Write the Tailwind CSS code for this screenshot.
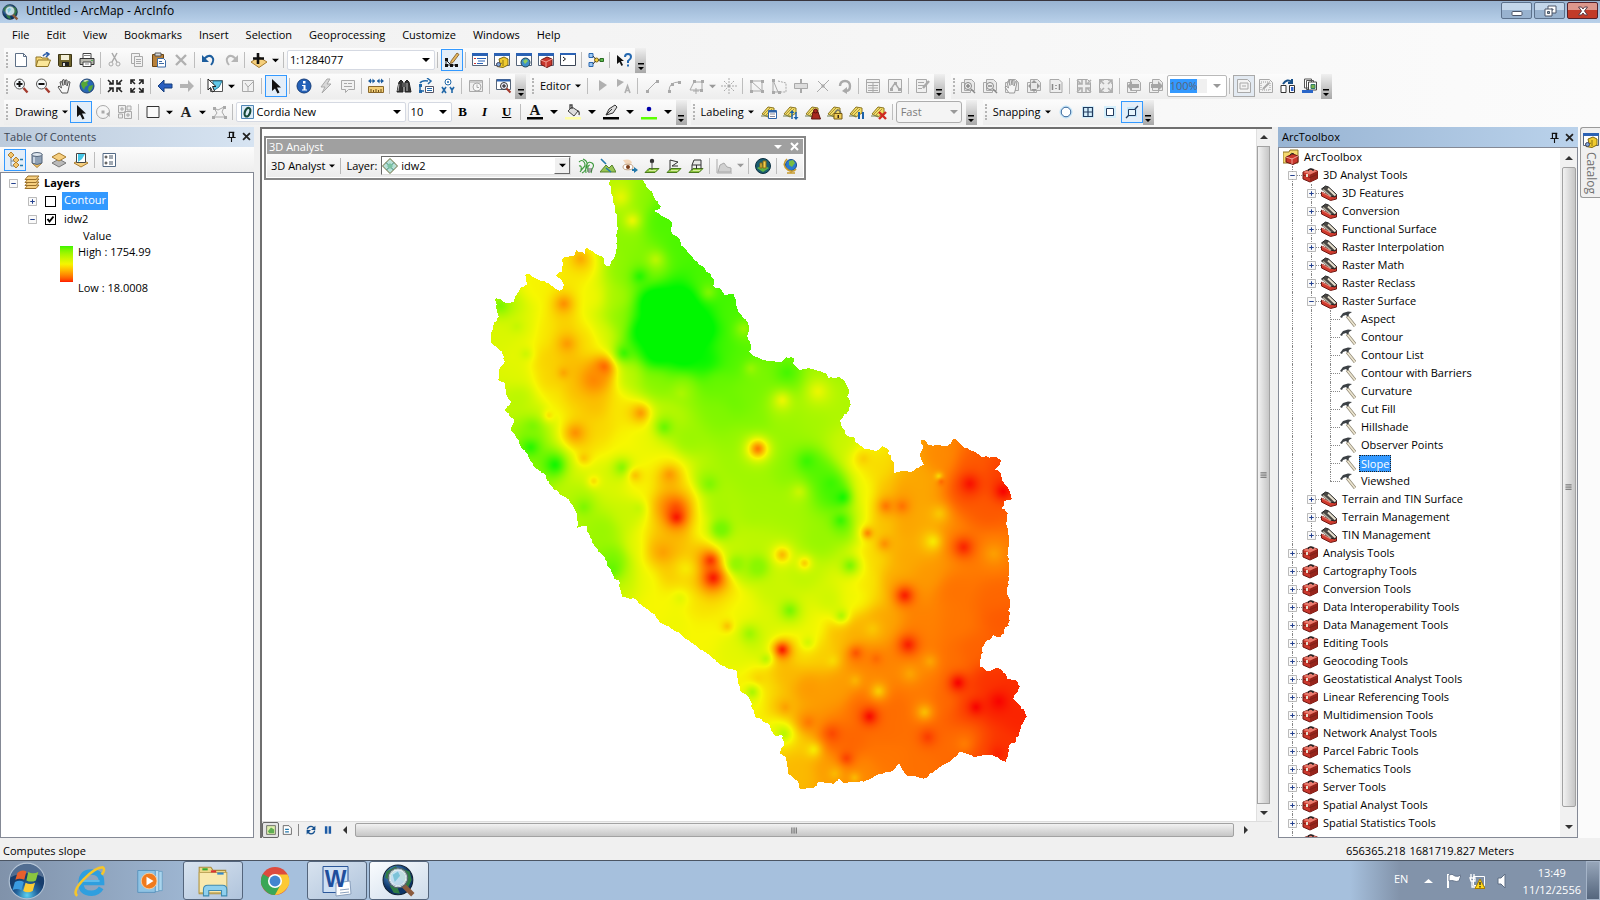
<!DOCTYPE html>
<html lang="en">
<head>
<meta charset="utf-8">
<title>Untitled - ArcMap - ArcInfo</title>
<script src="https://cdn.jsdelivr.net/npm/@tailwindcss/browser@4"></script>
</head>
<body class="flex h-screen flex-col overflow-hidden bg-[#f0f0f0] font-['Open_Sans','Noto_Sans',sans-serif] text-[11px] leading-4 text-black">

<!-- Title bar -->
<header class="flex h-[23px] shrink-0 items-center border-t border-[#38343c] bg-linear-to-b from-[#98b3d1] to-[#b9d1ea] pl-[2px]">
  <span data-icon="arcmap" class="size-[17px]"></span>
  <h1 class="ml-[7px] flex-1 pb-[2px] text-[12px]">Untitled - ArcMap - ArcInfo</h1>
  <div class="flex gap-[2px] self-start pt-px pr-[2px]">
    <button aria-label="Minimize" class="flex h-[17px] w-[31px] items-center justify-center rounded-[2px] border border-[#5c718c] bg-linear-to-b from-[#c3d6ea] from-50% to-[#98b2cf] to-50%"><svg class="h-3 w-4" viewBox="0 0 16 12"><rect x="3" y="6.500" width="10" height="4" rx="1" fill="#fff" stroke="#4b5468"/></svg></button>
    <button aria-label="Restore" class="flex h-[17px] w-[31px] items-center justify-center rounded-[2px] border border-[#5c718c] bg-linear-to-b from-[#c3d6ea] from-50% to-[#98b2cf] to-50%"><svg class="h-3 w-4" viewBox="0 0 16 12"><path d="M6 1h8v7h-8zM9 4h2v1h-2z" fill="#fff" stroke="#4b5468"/><path d="M3 4h7v7h-7z" fill="#fff" stroke="#4b5468"/><path d="M5.500 6.500h2v2h-2z" fill="#8aa" stroke="#4b5468"/></svg></button>
    <button aria-label="Close" class="flex h-[17px] w-[31px] items-center justify-center rounded-[2px] border border-[#54202a] bg-linear-to-b from-[#dd978c] from-50% to-[#c23b28] to-50%"><svg class="h-3 w-4" viewBox="0 0 16 12"><path d="M3.500 2h3l1.500 2 1.500-2h3l-3 4 3 4h-3l-1.500-2-1.500 2h-3l3-4z" fill="#fff" stroke="#5b3a44"/></svg></button>
  </div>
</header>

<!-- Menu and toolbars -->
<nav class="flex h-6 shrink-0 items-center gap-[17px] bg-linear-to-r from-[#f0f0f0] to-[#fbfbfb] pb-px pl-3">
  <button>File</button><button>Edit</button><button>View</button><button>Bookmarks</button><button>Insert</button><button>Selection</button><button>Geoprocessing</button><button>Customize</button><button>Windows</button><button>Help</button>
</nav>
<section class="flex h-20 shrink-0 flex-col bg-linear-to-r from-[#f0f0f0] to-[#fbfbfb]">
  <div class="flex h-[26px] items-center pl-1">
    <div class="flex h-[25px] items-center bg-linear-to-b from-[#fcfcfc] to-[#ededed]">
      <span data-grip></span>
      <div class="flex items-center" data-tools="new open save print | cut copy paste delete | undo redo | add ▾ |"></div>
      <span class="relative flex"><select aria-label="Map scale" class="h-5 w-[148px] appearance-none rounded-[2px] border border-[#d5d9e2] bg-white pl-[2px] leading-4"><option>1:1284077</option></select><span data-caret></span></span>
      <div class="flex items-center" data-tools="| *edittool | toc catalog search toolbox python | model | whats"></div>
      <span data-overflow></span>
    </div>
  </div>
  <div class="flex h-[26px] items-center pl-1">
    <div class="flex h-[25px] items-center bg-linear-to-b from-[#fcfcfc] to-[#ededed]">
      <span data-grip></span>
      <div class="flex items-center" data-tools="zoomin zoomout pan globe | fixin fixout | back forward | selectf ▾ clearsel | *pointer | info bolt popup | measure | find route xy | time | viewer"></div>
      <span data-overflow></span>
    </div>
    <div class="ml-1 flex h-[25px] items-center bg-linear-to-b from-[#fcfcfc] to-[#ededed]">
      <span data-grip></span>
      <button class="flex items-center gap-1 px-1">Editor<span data-tri></span></button>
      <div class="flex items-center" data-tools="| gpointer ganno | gline garc gpoly ▿ gpoint | greshape gcut gsplit gcross grotate | gtable gsketch | gcreate"></div>
      <span data-overflow></span>
    </div>
    <div class="ml-[6px] flex h-[25px] items-center bg-linear-to-b from-[#fcfcfc] to-[#ededed]">
      <span data-grip></span>
      <div class="flex items-center" data-tools="pzin pzout ppan pfull pone | pfixin pfixout | pback pfwd"></div>
      <span class="flex h-[22px] w-[60px] items-center rounded-[2px] border border-[#b9b9b9] bg-white px-[2px]"><input aria-label="Page zoom" value="100%" class="h-[14px] w-[27px] bg-[#3399ff] text-[#58667a]"><span class="h-[14px] w-[10px] bg-[#f0f0f0]"></span><svg class="ml-[6px] size-2" viewBox="0 0 8 8"><path d="M0 2h8l-4 4z" fill="#999"/></svg></span>
      <div class="flex items-center" data-tools="| #pdraft pfocus pages ddp"></div>
      <span data-overflow></span>
    </div>
  </div>
  <div class="flex h-[26px] items-center pl-1">
    <div class="flex h-[25px] items-center bg-linear-to-b from-[#fcfcfc] to-[#ededed]">
      <span data-grip></span>
      <button class="flex items-center gap-1 pr-[2px] pl-[5px]">Drawing<span data-tri></span></button>
      <div class="flex items-center" data-tools="*pointer grotsel gzoomsel | rect ▾ textA ▾ gedit |"></div>
      <span class="relative flex items-center"><span data-icon="opentype" class="absolute left-1 size-4"></span><select aria-label="Font" class="h-5 w-[170px] appearance-none rounded-[2px] border border-[#d5d9e2] bg-white pl-5 leading-4"><option>Cordia New</option></select><span data-caret></span></span>
      <span class="relative ml-[2px] flex"><select aria-label="Font size" class="h-5 w-[44px] appearance-none rounded-[2px] border border-[#d5d9e2] bg-white pl-[2px] leading-4"><option>10</option></select><span data-caret></span></span>
      <div class="flex items-center font-['Liberation_Serif',serif] text-[13px] font-bold">
        <button class="w-[22px]">B</button><button class="w-[22px] italic">I</button><button class="w-[22px] underline">U</button>
      </div>
      <div class="flex items-center" data-tools="| fontcol ▼ fillcol ▼ linecol ▼ markcol ▼"></div>
      <span data-overflow></span>
    </div>
    <div class="ml-1 flex h-[25px] items-center bg-linear-to-b from-[#fcfcfc] to-[#ededed]">
      <span data-grip></span>
      <button class="flex items-center gap-1 px-1">Labeling<span data-tri></span></button>
      <div class="flex items-center" data-tools="lmgr lprio lweight llock lpause lunpl |"></div>
      <span class="relative flex"><select aria-label="Label quality" class="h-[22px] w-[66px] appearance-none rounded-[3px] border border-[#adadad] bg-[#f4f4f4] pl-1 leading-4 text-[#7c7c7c]"><option>Fast</option></select><svg class="pointer-events-none absolute top-[7px] right-1 size-2" viewBox="0 0 8 8"><path d="M0 2h8l-4 4z" fill="#999"/></svg></span>
      <span data-overflow class="ml-1"></span>
    </div>
    <div class="ml-[6px] flex h-[25px] items-center bg-linear-to-b from-[#fcfcfc] to-[#ededed]">
      <span data-grip></span>
      <button class="flex items-center gap-1 px-1">Snapping<span data-tri></span></button>
      <div class="flex items-center" data-tools="snappt snapend snapvert *snapedge"></div>
      <span data-overflow></span>
    </div>
  </div>
</section>

<main class="flex min-h-0 flex-1">
  <!-- Table of contents -->
  <aside class="flex w-[254px] shrink-0 flex-col">
    <div class="flex h-5 shrink-0 items-center bg-linear-to-r from-[#bccbdc] to-[#d7e4f2] pr-[2px] pb-px pl-1 text-[#3c4654]">
      <h2 class="flex-1">Table Of Contents</h2>
      <button data-icon="pin" aria-label="Auto hide" class="mr-1 size-[11px]"></button><button data-icon="x" aria-label="Close" class="size-[11px]"></button>
    </div>
    <div class="flex h-[25px] shrink-0 items-center bg-linear-to-b from-[#fcfcfc] to-[#eee] pl-1" data-tools="*listdraw listsrc listvis listsel | options"></div>
    <div class="flex-1 border border-[#848995] bg-white pt-px pl-2">
      <div class="flex h-[18px] items-center"><button data-icon="minus" aria-label="Collapse Layers" class="size-[9px]"></button><span data-icon="layers" class="mr-1 ml-[6px] size-4"></span><b>Layers</b></div>
      <div class="flex h-[18px] items-center pl-[19px]"><button data-icon="plus" aria-label="Expand Contour" class="size-[9px]"></button><input id="c1" type="checkbox" class="ml-2 size-[11px] appearance-none border border-black bg-white"><label for="c1" class="ml-[6px] h-[18px] bg-[#3399ff] px-[2px] text-white">Contour</label></div>
      <div class="flex h-[18px] items-center pl-[19px]"><button data-icon="minus" aria-label="Collapse idw2" class="size-[9px]"></button><span class="relative ml-2 flex"><input id="c2" type="checkbox" checked class="size-[11px] appearance-none border border-black bg-white"><svg class="pointer-events-none absolute inset-0 size-[11px]" viewBox="0 0 11 11"><path d="M2.500 5l2 2.500 4-5" fill="none" stroke="#000" stroke-width="2"/></svg></span><label for="c2" class="ml-2">idw2</label></div>
      <p class="pl-[74px] leading-4">Value</p>
      <div class="flex pl-[51px]">
        <div class="mt-[2px] h-9 w-[13px] bg-linear-to-b from-[#35f500] via-[#f5f500] to-[#ff1000]"></div>
        <div class="ml-[5px] flex h-[52px] flex-col justify-between"><span>High : 1754.99</span><span>Low : 18.0008</span></div>
      </div>
    </div>
  </aside>

  <!-- Map view -->
  <section class="ml-[6px] flex min-w-0 flex-1 flex-col border-t-2 border-l-2 border-[#6f6f6f]">
    <div class="flex min-h-0 flex-1">
      <div class="relative min-w-0 flex-1 overflow-hidden bg-white">
        <canvas id="idw" width="570" height="630" role="img" aria-label="idw2 elevation raster" class="absolute top-[51px] left-[208px]"></canvas>
        <!-- Floating 3D Analyst toolbar -->
        <div class="absolute top-[7px] left-[2px] w-[542px] border-2 border-[#868686] bg-white p-px">
          <div class="flex h-[15px] items-center bg-[#a0a0a0] pr-1 pl-[2px] text-white"><span class="flex-1">3D Analyst</span><svg class="mr-2 size-2" viewBox="0 0 8 8"><path d="M0 2h8l-4 4z" fill="#fff"/></svg><svg class="size-[9px]" viewBox="0 0 9 9"><path d="M1 1l7 7M8 1l-7 7" stroke="#fff" stroke-width="2"/></svg></div>
          <div class="flex h-[23px] items-center bg-linear-to-b from-[#fafafa] to-[#ebebeb] pl-1">
            <button class="flex items-center gap-1">3D Analyst<span data-tri></span></button>
            <span class="mx-[5px] h-4 w-px bg-[#b8b8b8]"></span>
            <label for="lyr" class="mr-1">Layer:</label>
            <span class="relative mr-1 flex items-center"><span data-icon="raster" class="absolute left-px size-4"></span><select id="lyr" class="h-[19px] w-[190px] appearance-none border border-t-[#696969] border-r-[#ddd] border-b-[#ddd] border-l-[#696969] bg-white pl-[19px] leading-4"><option>idw2</option></select><span class="pointer-events-none absolute right-px flex h-[17px] w-4 items-center justify-center border border-t-white border-r-[#696969] border-b-[#696969] border-l-white bg-[#f0f0f0]"><svg class="size-[7px]" viewBox="0 0 8 8"><path d="M0 2h8l-4 4z"/></svg></span></span>
            <div class="flex items-center" data-tools="acontour asteep alos apoint aline apolyg | gprofile ▿ | scene | aglobe"></div>
          </div>
        </div>
      </div>
      <div class="flex w-4 shrink-0 flex-col items-center border-l border-[#e0e0e0] bg-[#f1f1f1] py-1 pr-[2px]">
        <svg class="size-2" viewBox="0 0 8 8"><path d="M0 6h8l-4-4z" fill="#333"/></svg>
        <div class="my-[5px] flex w-[13px] flex-1 items-center justify-center border border-[#a2a2a2] bg-linear-to-r from-[#f2f2f2] to-[#c6c6c6]"><span data-icon="vgrip" class="size-[7px]"></span></div>
        <svg class="size-2" viewBox="0 0 8 8"><path d="M0 2h8l-4 4z" fill="#333"/></svg>
      </div>
    </div>
    <div class="flex h-[17px] shrink-0 items-center border-t border-[#ddd]">
      <button aria-label="Data view" class="flex h-4 w-[17px] items-center justify-center rounded-[2px] border border-[#666] bg-[#e4e4e4]"><span data-icon="dataview" class="size-[10px]"></span></button>
      <button aria-label="Layout view" data-icon="layoutview" class="ml-[3px] size-[10px]"></button>
      <span class="mx-[6px] h-3 w-px bg-[#888]"></span>
      <button aria-label="Refresh" data-icon="refresh" class="ml-px size-[10px]"></button>
      <button aria-label="Pause drawing" data-icon="pause" class="ml-[7px] size-[10px]"></button>
      <svg class="mr-[6px] ml-2 size-2" viewBox="0 0 8 8"><path d="M6 0v8l-4-4z" fill="#333"/></svg>
      <div class="flex h-[14px] flex-1 items-center justify-center rounded-[2px] border border-[#a2a2a2] bg-linear-to-b from-[#f2f2f2] to-[#c6c6c6]"><span data-icon="hgrip" class="size-[7px]"></span></div>
      <svg class="mr-[22px] ml-2 size-2" viewBox="0 0 8 8"><path d="M2 0v8l4-4z" fill="#333"/></svg>
    </div>
  </section>

  <!-- ArcToolbox -->
  <aside class="ml-[6px] flex w-[300px] shrink-0 flex-col">
    <div class="flex h-5 shrink-0 items-center bg-linear-to-r from-[#98b4d3] to-[#bad2eb] pr-[3px] pl-1">
      <h2 class="flex-1">ArcToolbox</h2>
      <button data-icon="pin" aria-label="Auto hide" class="mr-1 size-[11px]"></button><button data-icon="x" aria-label="Close" class="size-[11px]"></button>
    </div>
    <div class="flex min-h-0 flex-1 overflow-hidden border border-[#848995] bg-white">
      <div id="tree" class="min-w-0 flex-1 overflow-hidden pl-1"></div>
      <div class="flex w-[17px] shrink-0 flex-col items-center bg-[#f1f1f1] py-[6px]">
        <svg class="size-2" viewBox="0 0 8 8"><path d="M0 6h8l-4-4z" fill="#333"/></svg>
        <div class="mt-[5px] mb-4 flex w-[14px] flex-1 items-center justify-center rounded-[2px] border border-[#a2a2a2] bg-linear-to-r from-[#f2f2f2] to-[#c6c6c6]"><span data-icon="vgrip" class="size-[7px]"></span></div>
        <svg class="size-2" viewBox="0 0 8 8"><path d="M0 2h8l-4 4z" fill="#333"/></svg>
      </div>
    </div>
  </aside>
  <div class="w-[22px] shrink-0 bg-[#fbfbfb] pl-[2px]">
    <button class="flex h-[71px] w-5 flex-col items-center rounded-l-[3px] border border-r-0 border-[#9a9a9a] bg-[#f0f0f0] pt-1 text-[12px] text-[#707070]"><span data-icon="catalog" class="mb-1 size-4"></span><span class="[writing-mode:vertical-rl]">Catalog</span></button>
  </div>
</main>

<!-- Status bar -->
<footer class="flex h-[22px] shrink-0 items-center pt-[3px] pl-[3px]"><span class="flex-1">Computes slope</span><span class="flex w-[254px] gap-1"><span>656365.218</span><span>1681719.827 Meters</span></span></footer>

<!-- Taskbar -->
<div class="flex h-10 shrink-0 items-center border-t border-[#4b5563] bg-linear-to-r from-[#8092aa] via-[#a6c0dd] via-15% to-[#a6c0dd]">
  <button aria-label="Start" data-icon="start" class="ml-2 size-[38px]"></button>
  <button aria-label="Internet Explorer" data-icon="ie" class="ml-[27px] size-[34px]"></button>
  <button aria-label="Media Player" data-icon="wmp" class="ml-[29px] size-[28px]"></button>
  <button aria-label="Windows Explorer" class="ml-[19px] flex h-[39px] w-[60px] items-center justify-center rounded-[3px] border border-[#54657c] bg-linear-to-br from-[#d8e3ef] to-[#b0c4dc]"><span data-icon="explorer" class="size-[34px]"></span></button>
  <button aria-label="Chrome" data-icon="chrome" class="ml-[17px] size-[30px]"></button>
  <button aria-label="Word" class="ml-[17px] flex h-[39px] w-[60px] items-center justify-center rounded-[3px] border border-[#54657c] bg-linear-to-br from-[#d8e3ef] to-[#b0c4dc]"><span data-icon="word" class="size-[32px]"></span></button>
  <button aria-label="ArcMap" class="ml-[2px] flex h-[39px] w-[60px] items-center justify-center rounded-[3px] border border-[#54657c] bg-linear-to-br from-[#fafcfe] to-[#cddbea]"><span data-icon="arcmap" class="size-[34px]"></span></button>
  <div class="ml-auto flex h-full w-[250px] items-center bg-linear-to-r from-[#a6c0dd] to-[#8293aa] to-20% text-white">
    <span class="mb-1 ml-[44px]">EN</span>
    <svg class="ml-4 size-[9px]" viewBox="0 0 9 9"><path d="M0 7h9l-4.500-4z" fill="#fff"/></svg>
    <span data-icon="flag" class="ml-3 size-4"></span><span data-icon="net" class="ml-2 size-4"></span><span data-icon="speaker" class="ml-2 size-4"></span>
    <div class="mr-[5px] ml-auto text-center leading-[17px]"><p>13:49</p><p>11/12/2556</p></div>
    <button aria-label="Show desktop" class="h-full w-[14px] border border-[#a5b4c8] bg-linear-to-b from-[#97a6ba] to-[#55667d]"></button>
  </div>
</div>

<script>
(() => {
// Small drawing helpers; icons use a 16 x 16 grid unless a viewBox is given.
const line = (d, c = '#222', w = 1) => `<path d="${d}" fill="none" stroke="${c}" stroke-width="${w}"/>`;
const fill = (d, c, s = 'none') => `<path d="${d}" fill="${c}" stroke="${s}"/>`;
const dot = (x, y, r, c, s = 'none') => `<circle cx="${x}" cy="${y}" r="${r}" fill="${c}" stroke="${s}"/>`;
const G = '#a9a9a9';
const nodes = (pts, c = G) => pts.map(p => fill(`M${p[0] - 1} ${p[1] - 1}h3v3h-3z`, c)).join('');
const win = fill('M.5 1.500h15v12h-15z', '#fff', '#56657a') + fill('M0 1h16v3h-16z', '#2b62b4');
const earth = dot(8, 8, 7, '#2868b4', '#1c3f72') + fill('M3 4l4-2 3 1-2 2 1 2-3 2-1 3-2-3-1-3zM10 8l4-1-1 4-3 3-1-3z', '#56a835') + fill('M4 3q3-2 6-1l-4 2z', '#cfe3b0');
const sheet = c => fill('M1.500 4.500h9v10h-9z', '#f0f0f0', c) + fill('M4.500 1.500h7l3 3v8h-10z', '#e9e9e9', c);
const mag = s => dot(6.5, 6, 5, '#f4f8fb', '#555') + line('M10.500 10l4 4.500', '#a33a2d', 2.4) + line(s, '#111', 2);
const inward = c => ['M1 2l4 4M2 6h4v-4', 'M15 2l-4 4M14 6h-4v-4', 'M1 14l4-4M2 10h4v4', 'M15 14l-4-4M14 10h-4v4'].map(d => line(d, c, 1.6)).join('');
const outward = c => ['M6 6l-4-4M2 6v-4h4', 'M10 6l4-4M14 6v-4h-4', 'M6 10l-4 4M2 10v4h4', 'M10 10l4 4M14 10v4h-4'].map(d => line(d, c, 1.6)).join('');
const tag = fill('M1 10l6-7 6 1v5l-6 4z', '#f3dd67', '#8b7520') + line('M3 10l6-6M5 11l6-6', '#a8923a') + line('M0 12h7', '#6f7d4a');
const hand = c => fill('M5 15l-4-6 1-1 2.500 2-1.500-6 1.500-.5 1.500 4-.5-5.500 1.500-.5 1 5.500.5-5h1.500l0 6 1.500-4.500 1.500.5-1.500 7-1 4z', '#f6f6f6', c);
const kneeGround = fill('M1 14.500l4-4h10l-4 4z', '#8ec63f', '#4a7a1e') + line('M5 12.500h7', '#d8eda0');
const box = fill('M1 5l8-3 6.500 2v7.500l-7.500 3.500-7-3z', '#c9372c', '#6d1712') + fill('M8 7.500l7.500-3.500v7.500l-7.500 3.500z', '#96241b') + fill('M1 5l8-3 6.500 2-7.500 3.500z', '#e8796c') + line('M1 8l7 2.500 7-3', '#7f1f18') + line('M6 4q1-3 5-1.500v1.500', '#222', 1.4) + fill('M4 7h2v3h-2z', '#e8e0d0');
const diamond = (y, c, s) => fill(`M8 ${y}l7 4-7 4-7-4z`, c, s);
const A = (c, y = 12) => `<text x="8" y="${y}" text-anchor="middle" font-family="Liberation Serif" font-weight="bold" font-size="15" fill="${c}">A</text>`;
const under = c => fill('M0 13h16v2.500h-16z', c);

const icons = {
  new: fill('M2.500 1.500h8l3 3v10h-11z', '#fff', '#5d6f86') + line('M10.500 1.500v3h3', '#5d6f86'),
  open: fill('M1 5h5l1 1h6v8h-12z', '#f7d774', '#8f7426') + fill('M3 8h12.500l-2.500 6.500h-12z', '#fbe79a', '#8f7426') + line('M8 4q2-3 5-2M11 0l3 2-3 3', '#2a5ca8', 1.5),
  save: fill('M1.500 2.500h13v12h-12l-1-1z', '#6f642c', '#3c3516') + fill('M4 3h8v5h-8z', '#f3efd8') + fill('M5 10h7v4h-7z', '#222') + fill('M6 11h2v3h-2z', '#ddd'),
  print: fill('M4 1.500h8v5h-8z', '#fff', '#444') + fill('M1 6.500h14v6h-14z', '#b8b8b0', '#333') + fill('M4 10h8v4.500h-8z', '#fff', '#444') + line('M5 3.500h6M6 12h4', '#888') + dot(13, 8.5, .8, '#3a3'),
  cut: line('M5 1l5 9M10 1l-5 9', G, 1.5) + dot(4, 12, 2, 'none', G) + dot(11, 12, 2, 'none', G),
  copy: fill('M2.500 1.500h8v10h-8z', '#f2f2f2', G) + fill('M5.500 4.500h8v10h-8z', '#f2f2f2', G) + line('M7 7.500h5M7 9.500h5M7 11.500h5', G),
  paste: fill('M1.500 2.500h11v12h-11z', '#b8813a', '#6a4413') + fill('M4 1h6v3h-6z', '#d8d8d8', '#555') + fill('M6.500 6.500h6l2 2v6.500h-8z', '#fff', '#3d6ba5') + line('M8 9.500h3M8 11.500h5', '#3d6ba5'),
  delete: line('M3 3l10 10M13 3l-10 10', '#b0b0b0', 2.4),
  undo: line('M3 7q5-5 8-2q3 3-1 8', '#1d5e9e', 2) + fill('M1 3v7h7z', '#1d5e9e'),
  redo: line('M13 7q-5-5-8-2q-3 3 1 8', '#b5b5b5', 2) + fill('M15 3v7h-7z', '#b5b5b5'),
  add: fill('M8 5l8 5-8 5.500-8-5.500z', '#f5cf7c', '#a87c2e') + line('M7 1v11M2 6.500h11', '#111', 2.6),
  edittool: line('M2 8v5h10M2 8l4 4', '#222') + nodes([[2, 7], [2, 13], [7, 13], [12, 13]], '#111') + fill('M7 9l6-8 2 1.500-6 8-2.500 1z', '#e8b85c', '#8b6b3c'),
  toc: win + line('M2 6.500h2M2 11.500h2', '#c33') + line('M5 6.500h9M5 11.500h6', '#2b62b4') + line('M6 9h7', '#2b62b4'),
  catalog: win + fill('M5 7l5-2 4 2v6l-5 2.500-6-1v-3h3z', '#f0cb2f', '#806a10') + line('M9 8v6M4 13l4-2', '#8b7410') + dot(4.5, 12.5, 2, '#7fa8d8', '#446'),
  search: win + dot(9.500, 10.500, 4.500, '#3e8ec8', '#245') + fill('M7 9l3-2 2 2-3 3z', '#8fcf5b'),
  toolbox: win + fill('M3 8l6-3 5 2v6l-5 2.500-6-3z', '#c9372c', '#6d1712') + line('M8 10v5M3 8l5 2 6-3', '#f0a095'),
  python: fill('M.5 1.500h15v12h-15z', '#fff', '#3c4656') + fill('M0 1h16v2h-16z', '#2b62b4') + line('M3 5l2.500 2-2.500 2', '#111'),
  model: fill('M1 1.500h4v4h-4zM1 10.500h4v4h-4z', '#9fc9f3', '#2867b0') + dot(8.500, 8, 2, '#f4d03f', '#8a6d10') + fill('M12 6.500h3.500v3h-3.500z', '#5cba4c', '#2a6b22') + line('M5 4l2.500 3M5 12l2.500-3M10 8h2', '#333'),
  whats: fill('M1 3v9l2.500-2 2 4 1.500-1-2-4h3z', '#111') + line('M9 5q0-3 3-3t3 3q0 2-3 4v2M12 12.500v2', '#2468b0', 2),
  zoomin: mag('M3.500 6h6M6.500 3v6'), zoomout: mag('M3.500 6h6'), pan: hand('#555'), globe: earth,
  fixin: inward('#222'), fixout: outward('#222'),
  back: fill('M1 8l6-6v4h8v4h-8v4z', '#2a5fc0', '#17407f'), forward: fill('M15 8l-6-6v4h-8v4h8v4z', '#b4b4b4'),
  selectf: fill('M3.500 2.500h12v11h-12z', '#fff', '#555') + fill('M6 3h9l-3 6-6 4z', '#62c8e8', '#2a7b98') + fill('M1 1v11l2.500-2.500 2 4.500 2-1-2-4.500h3.500z', '#fff', '#222'),
  clearsel: fill('M2.500 2.500h11v11h-11z', '#f1f1f1', G) + line('M5 5l3 4 5-5M8 9v4', G),
  pointer: fill('M4 1v12l3-2.500 2.500 5 2-1-2.500-5h4z', '#111'),
  info: dot(8, 8, 7, '#2461b8', '#153e7b') + fill('M6 7h3.500v5h-2v-4h-1.500zM7 3h2.500v2.500h-2.500zM6 11.500h5v1h-5z', '#fff'),
  bolt: fill('M9 1l-6 8h4l-3 6 9-9h-4l3-5z', '#d8d8d8', G),
  popup: fill('M1.500 2.500h13v9h-6l-3 3v-3h-4z', '#f2f2f2', G) + line('M4 5.500h3M4 8.500h8M8 5.500h4', G),
  measure: line('M1 3h6M9 3h6', '#1b5c9e') + fill('M0 3l3-2.500v5zM16 3l-3-2.500v5zM7 3l-2.500-2.500v5zM9 3l2.500-2.500v5z', '#1b5c9e') + fill('M.5 8.500h15v6h-15z', '#f4cf77', '#8a682a') + line('M3 14v-3M5.500 14v-2M8 14v-3M10.500 14v-2M13 14v-3', '#6a4c18'),
  find: fill('M1 14l2-10 2-2 2 2v10zM9 14v-10l2-2 2 2 2 10z', '#333', '#222') + fill('M6 5h4v4h-4z', '#555') + line('M3 6l-1 7M11 5v8', '#bbb'),
  route: line('M2 7v6h4M2 5q2-3 8-2M9 0l4 3-3 3', '#2268a8', 1.5) + nodes([[2, 7], [2, 13]], '#2268a8') + fill('M7.500 8.500h8v6h-8z', '#fff', '#556') + line('M9 10.500h5M9 12.500h5', '#2268a8'),
  xy: dot(8, 4, 3, '#fff', '#2268a8') + dot(8, 4, 1, '#2268a8') + line('M2 9l4 6M6 9l-4 6M10 9l2 3 2-3M12 12v3', '#2268a8', 1.6),
  time: fill('M1.500 2.500h13v11h-13z', '#eee', G) + dot(9, 9, 4, '#f7f7f7', G) + line('M9 6.500v3h2M1 4h14', G),
  viewer: fill('M.5 1.500h14v10h-14z', '#fff', '#56657a') + line('M1 2.500h13', '#2b62b4', 2) + dot(8, 8, 3.5, '#eef', '#333') + line('M10.500 10.500l4 4', '#a33a2d', 2) + line('M6 8h4M8 6v4', '#111'),
  gpointer: fill('M5 2v11l8-6z', '#b0b0b0'), ganno: fill('M1 1v8l7-5z', '#b0b0b0') + line('M9 15l2.500-7 2.500 7M10 12.500h3', '#b0b0b0', 1.6),
  gline: line('M3 13l10-10', G) + nodes([[3, 13], [13, 3]]), garc: line('M3 13q0-9 10-9', G) + nodes([[3, 13], [6, 6], [13, 4]]),
  gpoly: line('M2 12l4-8h8v8zM8 10v6M5 13h6', G) + nodes([[6, 3], [14, 3], [13, 12]]),
  gpoint: '<g stroke-dasharray="2 1">' + line('M8 0v5M8 11v5M0 8h5M11 8h5M3 3l3 3M13 3l-3 3M3 13l3-3M13 13l-3-3', G) + '</g>' + nodes([[7.5, 7.5]]),
  greshape: line('M2 3v10h11v-8M2 3l11 10M2 3h10', G) + nodes([[2, 3], [13, 13], [2, 13], [13, 3]]),
  gcut: line('M2 2v12h5M2 2l5 12', G) + '<g stroke-dasharray="2 1">' + line('M7 3l8 2v9h-6', G) + '</g>' + nodes([[2, 2], [2, 14], [8, 14]]),
  gsplit: line('M8 1v14', G, 2) + fill('M1.500 5.500h13v5h-13z', '#ddd', G), gcross: line('M2 14l12-12M3 3l10 10', G) + nodes([[7.5, 7.5]]),
  grotate: line('M3 8q0-5 5-5t5 5-4 5', G, 2.4) + fill('M10 9l-5 4 5 3z', G),
  gtable: fill('M1.500 1.500h13v13h-13z', '#f0f0f0', G) + line('M1 4.500h14M3 7.500h10M3 10h10M3 12.500h10M8 4v10', G),
  gsketch: fill('M1.500 1.500h13v13h-13z', '#f0f0f0', G) + line('M4 11l4-6 4 6', G, 1.4) + nodes([[4, 11], [8, 5], [12, 11]]),
  gcreate: fill('M1.500 1.500h10v13h-10z', '#f0f0f0', G) + line('M3 4.500h6M3 7.500h6M3 10.500h4', G) + line('M8 10l6-7', G, 2.5),
  pzin: sheet(G) + dot(8, 8, 3.5, '#eee', '#888') + line('M6 8h4M8 6v4M11 11l4 4', '#888', 1.5), pzout: sheet(G) + dot(8, 8, 3.5, '#eee', '#888') + line('M6 8h4M11 11l4 4', '#888', 1.5),
  ppan: sheet(G) + hand('#999'), pfull: sheet(G) + fill('M8 2l3 3h-6zM8 14l3-3h-6zM2 8l3-3v6zM14 8l-3-3v6z', '#999'),
  pone: fill('M2 1.500h9l3 3v10h-12z', '#eee', G) + line('M4.500 6v6M11.500 6v6M8 7v1M8 10v1', '#888', 1.5),
  pfixin: fill('M1.500 1.500h10l3 3v10h-13z', '#eee', G) + inward('#b0b0b0'), pfixout: fill('M1.500 1.500h10l3 3v10h-13z', '#eee', G) + outward('#b0b0b0'),
  pback: sheet(G) + fill('M1 8l5-5v3h7v4h-7v3z', '#a5a5a5'), pfwd: sheet(G) + fill('M15 8l-5-5v3h-7v4h7v3z', '#a5a5a5'),
  pdraft: fill('M1.500 1.500h10l3 3v10h-13z', '#f3f3f3', G) + line('M4 5h8v6h-8zM6 8h4', G),
  pfocus: fill('M1.500 1.500h10l3 3v10h-13z', '#f3f3f3', G) + '<path d="M3 4h9v8h-9z" fill="none" stroke="#999" stroke-dasharray="1 1"/>' + line('M5 11l6-6', G, 2),
  pages: line('M3 6q4-6 9-2M12 1v4h-4', '#174f88', 2) + fill('M1 7.500h5v7h-5zM9.500 7.500h5v7h-5z', '#fff', '#333') + fill('M11 9h2.500v4h-2.500z', '#36c'),
  ddp: fill('M2.500 1h7v9h-7zM4.500 2.500h7v9h-7z', '#fff', '#555') + fill('M6.500 4h8v8h-8z', '#fff', '#444') + fill('M9 6.500h4v4h-4z', '#7ab648', '#376') + fill('M0 12h11v3h-11z', '#2a66c8'),
  grotsel: dot(8, 8, 6.5, 'none', G) + nodes([[7.5, 7.5]]) + fill('M14 8l-3 2 4 3z', G), gzoomsel: fill('M1.500 1.500h7v7h-7zM7.500 7.500h7v7h-7zM1.500 10h4v4h-4zM10 2h4v4h-4z', '#eee', G) + line('M5 3v4M3 5h4M11 9v4M9 11h4', G),
  rect: fill('M2 2.500h12v11h-12z', '#fafafa', '#333'), textA: A('#222', 13), gedit: line('M3 4l4 2 6-3-2 5 3 5h-11l3-4z', G) + nodes([[3, 4], [13, 3], [14, 13], [2, 13]]),
  opentype: fill('M1.500 1.500h12v13h-12z', '#dcebf7', '#4f86b5') + '<ellipse cx="7.500" cy="8" rx="2.600" ry="4.500" fill="none" stroke="#174a3a" stroke-width="2.200" transform="rotate(20 7 8)"/>',
  fontcol: A('#111', 11) + under('#000'), fillcol: fill('M3 7l4-4 6 4-4 5z', '#ddd', '#444') + line('M5 5v-4h2v4M12 7q3 0 2 4', '#444', 1.3) + under('#ffffa8'),
  linecol: fill('M3 11l3-6 6-4 2 2-4 6z', '#ddd', '#333') + line('M3 11l6-6', '#333') + under('#000'), markcol: dot(8, 5, 2.3, '#00a') + under('#5aff00'),
  lmgr: tag + fill('M7.500 6.500h8v8h-8z', '#fff', '#2d62a8') + line('M8 7.500h7', '#2d62a8', 2) + line('M9 10h5M9 12.500h5', '#889'),
  lprio: tag + line('M9 15v-7M13 8v7', '#1b61a8', 1.5) + fill('M9 6l2.500 3h-5zM13 16l2.500-3h-5z', '#1b61a8'),
  lweight: tag + fill('M8 8h5l2.500 7h-9z', '#a8281f', '#5c1410') + dot(10.500, 7, 2, '#a8281f', '#5c1410'),
  llock: tag + line('M8.500 10v-2q2.500-4 5 0v2', '#776', 1.5) + fill('M7 9.500h8v5.500h-8z', '#f0cd59', '#775a12') + fill('M10.500 11h1.500v3h-1.500z', '#321'),
  lpause: tag + fill('M9 8h2v7h-2zM13 8h2v7h-2z', '#1b61a8'), lunpl: tag + line('M8 8l7 7M15 8l-7 7', '#d02a20', 2.4),
  snappt: dot(8, 8, 6, '#fff', '#b8e2fa') + dot(8, 8, 4.8, '#fff', '#2b5f98'), snapend: fill('M2 2h12v12h-12z', '#d4effc') + line('M3.500 3.500h9v9h-9zM8 3v10M3 8h10', '#223a5e', 1.2),
  snapvert: fill('M2 2h12v12h-12z', '#d4effc') + fill('M4.500 4.500h7v7h-7z', '#fff', '#223a5e'), snapedge: fill('M3 3h10v10h-10z', '#c2e6fb') + fill('M4.500 5.500h7v6h-7z', '#e6f4fc', '#223a5e') + line('M2 14l3-3M11 5l3-3', '#223a5e', 1.4),
  listdraw: fill('M4 0l3 3-3 3-3-3zM9 5l3 3-3 3-3-3zM9 10l3 3-3 3-3-3z', '#f3c66d', '#b3802d') + line('M4 6v8h3M4 9h3', '#789') + line('M13 7.500h3M13 13.500h3', '#27a', 1.4),
  listsrc: fill('M3 11l5-2 5 2-5 4.500z', '#f3c66d', '#a87c2e') + fill('M3 2h10v9q-5 3-10 0z', '#8fa1b6', '#55657a') + `<ellipse cx="8" cy="2.500" rx="5" ry="2" fill="#dfe7ef" stroke="#55657a"/>` + line('M5 5v6', '#dfe7ef', 1.5),
  listvis: diamond(7, '#b9b9b9', '#777') + diamond(1, '#f6cf80', '#a87c2e'), listsel: diamond(7, '#f6cf80', '#a87c2e') + fill('M3.500 1.500h9v9h-9z', '#fff', '#444') + fill('M5 2l7 0-3 5-4 3z', '#45c6e6'),
  options: fill('M2 1.500h12.500v13h-12.500z', '#fff', '#546a85') + dot(5, 5, 1, '#fff', '#333') + dot(5, 11, 1, '#fff', '#333') + line('M8 4h4M8 6h4M8 10h4M8 12h4', '#456'),
  layers: [10, 7, 4, 1].map(y => fill(`M1 ${y + 3.500}l3-3.500h11l-3 3.500z`, '#f6cf80', '#9a702a')).join(''),
  raster: fill('M8 .5l7.500 7.500-7.500 7.500-7.500-7.500z', '#b8e0d8', '#6a6a3a') + line('M4 4.500l7.500 7.500M12 4.500l-7.500 7.500', '#3a8a7a') + fill('M8 5l3 3-3 3-3-3z', '#7cc3a0'),
  acontour: line('M1 4q3-3 5 0t0 5-4 5M1 8q3-1 2 4M5 1q5 2 4 7t-5 7M8 15q-1-6 1-9t5-1 0 6l-1 4M10 14q-1-7 2-7', '#3c9a3c', 1.1) + line('M11 15v-5M13 14v-4', '#555'),
  asteep: fill('M0 14l6-7 3 3 3-3 4 7z', '#98c653', '#55802a') + line('M1 1l5 5M6 10l5 4', '#27a', 1.6), alos: fill('M1 2q8-2 9 3l-5 3z', '#f2d5b8') + `<ellipse cx="6" cy="9" rx="5" ry="2.800" fill="#fff" stroke="#c0a080"/>` + dot(6, 9, 2, '#7b3d18') + line('M10 12h3', '#27a', 2) + fill('M12 9l4 3-4 3z', '#27a'),
  apoint: kneeGround + dot(8, 3, 2.2, '#333') + line('M8 4v8', '#555'), aline: kneeGround + line('M4 12v-10l8 2-6 4h6', '#333'), apolyg: kneeGround + fill('M4 7l2-5h7v5z', '#e8e8e8', '#333') + line('M4 7v5M13 7v4M8.500 7v4', '#333'),
  gprofile: line('M1 1v14h15', G) + fill('M2 14l2-7 4-2 3 4 4 1v4z', '#d0d0d0', G), scene: dot(8, 8, 7.5, '#1a5d6f', '#0d3040') + fill('M2 10l6 4 6-4-6-3z', '#5cb346') + fill('M5 5h2v5h-2zM8 3h3v7h-3z', '#f2ce4d', '#8b6a15'),
  aglobe: dot(8, 7, 5.5, '#2c7bd0', '#174a88') + fill('M6 3l4-1 2 3-3 4-3-2z', '#78bd42') + line('M4 1q-6 6 1 11 5 3 8-1M8 13v2M4 15h8', '#c89b2c', 1.6),
  pin: line('M4 2h8M5 2v7M2 9.500h12M8 10v6', '#111', 1.6) + line('M10.500 2v7', '#111', 2.6), x: line('M3 3l10 10M13 3l-10 10', '#222', 2.6),
  plus: fill('M.9.9h14.200v14.200h-14.200z', '#fafafa', '#888') + line('M4 8h8M8 4v8', '#23408e', 1.8), minus: fill('M.9.9h14.200v14.200h-14.200z', '#fafafa', '#888') + line('M4 8h8', '#23408e', 1.8),
  vgrip: line('M1 2h14M1 7h14M1 12h14', '#555', 2), hgrip: line('M2 1v14M7 1v14M12 1v14', '#555', 2),
  dataview: fill('M1 1h14v14h-14z', '#e0efb0', '#333') + fill('M3 10l5-6 5 3v6h-8z', '#5fae53'), layoutview: fill('M2 1h9l4 4v10h-13z', '#fff', '#222') + line('M5 7h6M5 11h6', '#27a', 2),
  refresh: line('M2 7q1-5 6-5 4 0 5 4M14 9q-1 5-6 5-4 0-5-4', '#14508f', 2) + fill('M15 1v7h-7zM1 15v-7h7z', '#14508f'), pause: fill('M3 2h4v12h-4zM9 2h4v12h-4z', '#1d5ba5'),
  box, rootbox: fill('M0 3h6l1-2h8v13h-15z', '#f5d86e', '#8f7426') + fill('M3 8l7-3 5 2v6l-5 2.500-7-2.500z', '#c9372c', '#6d1712') + line('M9 9v6M3 8l6 2 6-3', '#f0a095') + line('M7 6q1-3 4-1', '#222'),
  toolset: fill('M.5 7l9 4 6-1v4l-6 1.500-9-4.500z', '#d03a2d', '#6f1a14') + fill('M.5 4l4-3 3 1 8 7.500-1.500 2.500-5-1z', '#4a4844', '#222') + line('M2 4.500l8 7', '#b9b2a2', 1.6) + line('M7 3.500l7.500 7', '#e8e1cf', 2) + line('M1 7.500l8 4', '#f08a7a'),
  hammer: line('M7 5l8 10', '#8a826e', 3) + line('M7 5l8 10', '#ece5d0', 1.8) + fill('M0 6l3-4 5-1.500 4 .5-3 2-1 3-2-2-3 1-1 2z', '#3c4145'),
  flag: line('M3 1v14', '#fff', 2) + fill('M4 2q3-2 6 1 3 1 6-1l-2 6q-3 1-5 0-2-1-5 0z', '#fff', '#66758c'),
  net: fill('M4.500 3.500h11v9h-11z', '#7d8ea5', '#fff') + line('M2 1v4M5 1v4M1 5h5v3h-4zM3 8v6h4', '#fff', 1.3) + fill('M11 6l5 9.500h-10z', '#ffd81a', '#a87d00') + line('M11 9v3M11 13v1.500', '#222', 1.3),
  speaker: fill('M5 5h3l4-4v14l-4-4h-3z', '#fff', '#5f6e84')
};
// Larger application icons on a 32 x 32 grid.
const big = {
  arcmap: '<defs><radialGradient id="ga" cx=".35" cy=".3"><stop offset="0" stop-color="#5aa5e0"/><stop offset="1" stop-color="#0d3468"/></radialGradient></defs>' + dot(15, 15, 14, 'url(#ga)', '#123') + fill('M4 7l9-5 2 3-5 4-3 6-4-2zM18 4l8 3 2 8-4 8-3-6-5-4zM7 20l7 1 3 7-6-1z', '#2f7c44') + line('M20 20l9 9', '#8b5b3e', 4.5) + dot(15, 13, 7.5, 'rgba(215,238,250,.85)', '#e9eef2') + dot(15, 13, 8.5, 'none', '#d0dae2') + dot(15, 13, 9.3, 'none', '#56646f') + fill('M10 10l5-3 2 4-5 6z', '#7cc3d8'),
  start: '<defs><radialGradient id="gs" cy=".9"><stop offset="0" stop-color="#5bd2f2"/><stop offset=".6" stop-color="#22629c"/><stop offset="1" stop-color="#173d6c"/></radialGradient></defs>' + dot(16, 16, 15, 'url(#gs)', '#aebfd2') + fill('M2 13q14-7 28 0-3-12-14-12t-14 12z', 'rgba(255,255,255,.25)') + fill('M8 9q4-3 7.500-1l-1.800 7q-4-2-7.500 0z', '#e8602c') + fill('M17 8.500q4 2 8.500 0l-2 7q-4 2-8 0z', '#8cc63f') + fill('M5.800 16.800q4-2 7.500 0l-2 7q-4-2-7.500 0z', '#3a9be0') + fill('M14.800 17.500q4 2 8 0l-2 7q-4 2-8 0z', '#fbcb35'),
  ie: line('M7 17.500h20q0-10-9.500-10t-10 10 10 10q6 0 9-5', '#2f9fdf', 5) + line('M8 16h17', '#8bd3f4', 1) + line('M4 30q-5-4 6-15.500t18-11.500q3 2-1 7', '#f5c52b', 2.4),
  wmp: fill('M11 5h19v22h-19z', '#a9d5ee', '#6a9fc4') + fill('M7 4h19v24h-19z', '#b9dcf1', '#6a9fc4') + fill('M2 4h20v25h-20z', '#8ec3e4', '#5590ba') + dot(15, 16, 9, '#f07a1c', '#fbd0a0') + fill('M12 11l8 5-8 5z', '#fff'),
  explorer: fill('M3 3h11l2 3h12v22h-25z', '#efd888', '#a98c3c') + fill('M3 8h26v19h-26z', '#f9e9ae', '#c0a75c') + line('M6 5h5', '#3a3', 2) + line('M14 7h5', '#d33', 2) + line('M20 9h6', '#38c', 2) + fill('M7 30v-6q0-4 4-4h14q4 0 4 4v6h-5v-5h-12v5z', '#8fd0ee', '#3f8ab0'),
  chrome: dot(16, 16, 15, '#dd4b3e') + fill('M16 16l-13-7.500q-5 10 2 17 4 5 11 5.500l7-11z', '#3aa757') + fill('M16 9h13.500q5 10-3 17-4 4-10.500 5l6.500-12z', '#fcc934') + dot(16, 16, 7.5, '#fff') + dot(16, 16, 5.8, '#4285cf'),
  word: fill('M2 1.500h25v26h-25z', '#cfe0f4', '#2b579a') + fill('M15 18l14-2 1 13-15 2z', '#fff', '#8aa0bd') + '<text x="14.500" y="22" text-anchor="middle" font-family="Liberation Sans" font-weight="bold" font-size="23" fill="#1f4e9c">W</text>' + line('M19 25l9-1M19 28l9-1', '#8aa0bd')
};
const draw = n => big[n] ? `<svg class="block size-full" viewBox="0 0 32 32">${big[n]}</svg>` : `<svg class="block size-full" viewBox="0 0 16 16">${icons[n] || ''}</svg>`;
const caret = c => `<svg class="mx-[2px] size-[7px] shrink-0" viewBox="0 0 8 8"><path d="M0 2h8l-4 4z" fill="${c}"/></svg>`;

document.querySelectorAll('[data-tools]').forEach(el => {
  el.innerHTML = el.dataset.tools.split(' ').map(t => {
    if (t === '|') return '<span class="mr-[3px] ml-[2px] h-4 w-px shrink-0 bg-[#bdbdbd]"></span>';
    if (t === '▼') return '<svg class="mx-1 size-2 shrink-0" viewBox="0 0 8 8"><path d="M0 2h8l-4 4z"/></svg>';
    if (t === '▾' || t === '▿') return caret(t === '▾' ? '#000' : '#999');
    const n = t.replace(/[*#]/, '');
    const c = t[0] === '*' ? 'flex size-[22px] shrink-0 items-center justify-center border border-[#3399ff] bg-[#e3eef9]'
      : t[0] === '#' ? 'flex size-[22px] shrink-0 items-center justify-center border border-[#aaa] bg-[#e3eaf2]'
      : 'flex size-[22px] shrink-0 items-center justify-center';
    return `<button aria-label="${n}" class="${c}"><span class="size-4 shrink-0">${draw(n)}</span></button>`;
  }).join('');
});
document.querySelectorAll('[data-icon]').forEach(el => {
  el.classList.add('shrink-0');
  if (el.tagName === 'SPAN') el.classList.add('pointer-events-none');
  el.innerHTML = draw(el.dataset.icon);
});
document.querySelectorAll('[data-tri]').forEach(el => el.innerHTML = '<svg class="size-[6px]" viewBox="0 0 8 8"><path d="M0 2h8l-4 4z"/></svg>');
document.querySelectorAll('[data-caret]').forEach(el => { el.className = 'pointer-events-none absolute top-[6px] right-[5px]'; el.innerHTML = '<svg class="size-2" viewBox="0 0 8 8"><path d="M0 2h8l-4 4z"/></svg>'; });
document.querySelectorAll('[data-grip]').forEach(el => { el.className = 'ml-[2px] mr-[2px] h-4 w-[2px] border-l-2 border-dotted border-[#b5b5b5]'; });
document.querySelectorAll('[data-overflow]').forEach(el => { el.className += ' flex h-full w-[11px] items-end justify-center bg-linear-to-b from-[#f0f0f0] to-[#a8a8a8] pb-[2px]'; el.innerHTML = '<svg class="size-2" viewBox="0 0 8 8"><path d="M1 0h6v1.500h-6zM1 4h6l-3 3z"/></svg>'; });

// ArcToolbox tree: [level, state, icon, label]
const toolboxes = 'Analysis|Cartography|Conversion|Data Interoperability|Data Management|Editing|Geocoding|Geostatistical Analyst|Linear Referencing|Multidimension|Network Analyst|Parcel Fabric|Schematics|Server|Spatial Analyst|Spatial Statistics|Tracking Analyst'.split('|');
const rows = [
  [0, '', 'rootbox', 'ArcToolbox'], [1, 'minus', 'box', '3D Analyst Tools'],
  ...'3D Features|Conversion|Functional Surface|Raster Interpolation|Raster Math|Raster Reclass'.split('|').map(t => [2, 'plus', 'toolset', t]),
  [2, 'minus', 'toolset', 'Raster Surface'],
  ...'Aspect|Contour|Contour List|Contour with Barriers|Curvature|Cut Fill|Hillshade|Observer Points|Slope|Viewshed'.split('|').map(t => [3, '', 'hammer', t]),
  ...'Terrain and TIN Surface|Terrain Management|TIN Management'.split('|').map(t => [2, 'plus', 'toolset', t]),
  ...toolboxes.map(t => [1, 'plus', 'box', t + ' Tools'])
];
const guide = '<span class="flex h-[18px] w-[19px] shrink-0 justify-center"><span class="h-full border-l border-dotted border-[#888]"></span></span>';
const gap = '<span class="w-[19px] shrink-0"></span>';
document.getElementById('tree').innerHTML = rows.map(([lv, st, ic, label]) => {
  const lead = lv === 3 ? guide + guide : lv === 2 ? guide : '';
  const last = label === 'TIN Management' || label === 'Viewshed';
  const branch = lv === 0 ? '' : `<span class="relative flex h-[18px] w-[19px] shrink-0 items-center justify-center"><span class="absolute left-[9px] border-l border-dotted border-[#888] ${last ? 'top-0 h-[9px]' : 'inset-y-0'}"></span><span class="absolute right-0 left-[9px] border-t border-dotted border-[#888]"></span>${st ? `<button aria-label="${label}" class="relative size-[9px]">${draw(st)}</button>` : ''}</span>`;
  const text = label === 'Slope' ? 'ml-[3px] bg-[#3399ff] px-[2px] leading-[17px] text-white outline-1 -outline-offset-1 outline-dotted outline-[#222]' : 'ml-[5px] whitespace-nowrap';
  return `<div class="flex h-[18px] items-center">${lead}${branch}<span class="size-4 shrink-0">${draw(ic)}</span><span class="${text}">${label}</span></div>`;
}).join('');

// Elevation raster. Coordinates are thirds of a pixel; the east sheet is shifted by (750, 480).
const E = a => a.map(p => [p[0] + 750, p[1] + 480, ...p.slice(2)]);
const outline = [
  [414,-12],[512,-12],[522,8],[530,22],[548,40],[556,60],[572,80],[570,88],[554,92],[570,105],[600,120],[606,128],[604,155],[625,175],[640,200],[675,243],[700,260],[720,280],[732,300],[730,318],[750,325],[764,345],[780,341],[792,343],[800,380],[806,398],[832,425],[838,445],[832,470],[842,495],[838,515],[850,528],[880,541],[900,542],
  ...E([[180,66],[200,52],[222,55],[220,70],[235,88],[265,84],[300,93],[318,100],[326,114],[357,110],[372,122],[388,152],[382,170],[391,185],[386,212],[370,230],[358,240],[366,262],[380,287],[398,290],[415,312],[435,328],[470,332],[488,318],[502,326],[512,355],[521,375],[524,401],[545,393],[575,395],[600,380],[612,374],[601,350],[609,325],[603,300],[612,300],[625,315],[660,315],[680,318],[702,296],[735,325],[760,332],[785,350],[830,352],[843,360],[840,374],[824,388],[842,398],[850,425],[868,450],[875,478],[852,485],[846,505],[864,520],[858,550],[866,590],[864,640],[868,685],[862,750],[869,785],[866,858],[856,862],[852,880],[836,892],[820,885],[810,900],[798,902],[786,930],[781,960],[782,982],[800,992],[840,986],[858,1003],[860,1018],[888,1021],[900,1038],[884,1065],[880,1076],[896,1092],[915,1118],[920,1130],[900,1172],[885,1208],[868,1215],[865,1245],[858,1266],[830,1250],[806,1246],[770,1250],[718,1235],[700,1255],[665,1278],[640,1298],[610,1316],[560,1306],[545,1285],[537,1271],[520,1292],[465,1308],[430,1325],[370,1330],[357,1315],[340,1332],[300,1326],[275,1345],[242,1347],[232,1322],[204,1302],[196,1250],[180,1240],[192,1210],[188,1187],[165,1186],[145,1150],[104,1128],[95,1090],[78,1062],[60,1052],[52,995],[20,985],[0,973]]),
  [680,1400],[620,1355],[565,1320],[548,1300],[520,1280],[490,1255],[455,1250],[447,1200],[432,1195],[415,1160],[405,1132],[385,1115],[365,1085],[350,1038],[322,1043],[320,1000],[298,960],[250,925],[230,900],[222,880],[195,862],[175,830],[152,800],[148,780],[122,752],[132,720],[105,690],[122,665],[108,640],[103,605],[84,600],[88,570],[104,545],[96,515],[62,487],[62,465],[70,435],[88,410],[78,380],[78,355],[92,358],[108,370],[130,368],[140,345],[152,322],[172,312],[166,285],[178,280],[200,296],[235,310],[268,332],[280,322],[276,300],[255,288],[276,275],[278,235],[300,228],[312,230],[318,210],[345,222],[348,203],[370,215],[400,232],[405,255],[418,258],[438,220],[442,180],[440,110],[428,60]
];
// Regional trend: [x, y, value], 0 = low (red), 1 = high (green)
const trend = [
  [440,30,.62],[500,60,.72],[570,120,.85],[470,180,.72],[620,200,.85],[540,260,.75],[460,280,.72],[700,290,.85],[550,370,1.15],[640,370,1.1],[520,450,1.1],[610,450,1.2],[695,450,1.1],[560,520,1.1],[640,520,1.1],[710,540,1.02],[780,400,.85],[820,470,.8],[770,500,.87],[440,420,.72],[440,350,.66],[480,580,.62],[560,600,.72],[640,620,.7],[740,600,.78],
  [330,260,.45],[370,350,.5],[300,300,.47],[200,320,.49],[120,380,.62],[90,460,.56],[160,440,.55],[140,580,.55],[230,450,.47],[280,440,.42],[230,540,.42],[240,600,.42],[300,560,.38],[310,630,.39],[370,600,.33],[380,680,.38],[350,470,.44],[250,650,.47],[400,450,.55],[150,650,.64],[180,750,.72],[200,700,.6],[240,850,.75],[300,850,.55],[330,780,.42],[400,750,.43],[450,690,.47],[450,780,.5],[530,760,.52],[600,700,.62],[650,780,.7],[750,700,.74],[820,650,.74],[860,720,.74],
  [400,900,.56],[330,950,.64],[400,1050,.7],[430,1130,.76],[470,1000,.6],[520,920,.5],[590,850,.5],[600,900,.4],[590,970,.35],[620,1050,.35],[560,1100,.37],[610,1110,.37],[650,930,.47],[700,900,.68],[740,980,.68],[700,1050,.52],[500,1100,.54],[470,1200,.6],[530,1200,.52],[600,1180,.4],[640,1160,.45],[690,1120,.38],[720,1220,.38],[560,1270,.5],[680,1270,.46],[780,1250,.48],[780,1120,.62],[850,1080,.62],[820,1180,.65],[850,900,.68],[800,850,.68],[900,960,.67],[700,1370,.5],[620,1320,.52],
  ...E([[50,50,.83],[130,110,.75],[200,110,.8],[300,90,.68],[350,200,.65],[280,220,.67],[180,230,.68],[50,180,.8],[60,300,.7],[200,400,.72],[300,400,.83],[340,460,.88],[380,560,.82],[420,350,.5],[380,320,.6],[440,450,.52],[420,560,.5],[470,380,.44],[490,450,.38],[480,550,.38],[450,650,.44],[440,720,.47],[400,770,.52],[300,600,.7],[200,500,.67],[100,520,.67],[250,700,.62],[150,750,.6],[330,780,.6],[60,800,.52],[10,750,.42],[280,870,.53],[230,840,.55],[150,850,.56],[100,900,.6],[40,930,.54],
  [550,450,.32],[600,420,.34],[660,350,.28],[760,380,.18],[840,400,.13],[740,450,.16],[800,500,.18],[680,600,.27],[620,600,.36],[560,560,.33],[560,650,.34],[520,720,.34],[620,700,.31],[700,750,.23],[820,640,.25],[830,780,.21],[840,830,.18],[720,850,.24],[600,850,.26],[480,850,.33],[400,870,.35],[350,880,.38],[300,930,.42],[240,930,.45],[200,1000,.37],[260,1040,.3],[350,1050,.32],[420,950,.26],[500,970,.27],[600,980,.27],[700,970,.23],[760,930,.2],[800,1020,.1],[870,1040,.09],[830,1100,.07],[890,1130,.07],[840,1220,.1],[740,1100,.13],[740,1200,.22],[680,1080,.22],[600,1050,.25],[520,1100,.22],[420,1100,.22],[500,1180,.22],[400,1200,.2],[330,1200,.2],[250,1150,.28],[180,1100,.38],[130,1050,.45],[100,1090,.52],[160,1160,.52],[230,1200,.42],[240,1300,.38],[330,1280,.32],[420,1290,.28],[500,1240,.24],[600,1280,.23],[680,1220,.22],[780,1230,.14]])
];
// Station highs and lows: [x, y, value, radius]
const stations = [
  [280,370,.3,28],[290,490,.32,28],[400,560,.2,28],[370,598,.28,35],[280,577,.34,15],[510,698,.32,28],[315,757,.3,28],[340,832,.4,20],[370,902,.45,16],[235,705,.45,16],[450,50,.54,28],[485,120,.53,24],[555,238,.63,25],[508,288,.92,22],[462,517,.88,22],[582,740,.78,25],[715,335,.75,25],[820,445,.7,22],[632,640,.66,22],[90,375,.75,25],[180,800,.92,28],[253,853,.96,28],[185,740,.75,25],[455,862,.73,25],[340,980,.74,25],[495,885,.4,20],[597,883,.32,26],[615,980,.2,40],[618,1010,.05,22],[720,1140,.12,25],[728,1192,.06,30],[750,1045,.76,26],[862,1158,.74,25],[800,1150,.7,20],[862,805,.25,28],[578,1115,.33,30],[645,1165,.47,22],[628,1255,.54,25],[718,910,.74,25],[425,1165,.8,30],[165,520,.58,20],[138,437,.6,20],[500,985,.6,22],[330,235,.35,25],
  ...E([[200,97,.86,26],[92,85,.7,20],[185,180,.53,28],[293,153,.53,35],[260,363,.88,30],[365,470,.96,20],[360,540,.88,20],[330,430,.88,28],[235,455,.6,24],[5,565,.76,22],[185,643,.38,24],[252,668,.42,18],[112,680,.72,22],[50,670,.7,18],[388,675,.74,26],[208,810,.75,26],[362,825,.64,20],[88,880,.68,22],[20,857,.4,16],[185,928,.06,22],[262,905,.57,20],[135,955,.62,18],[113,1018,.42,18],[95,1055,.65,20],[190,1180,.62,28],[430,355,.42,25],[442,578,.28,16],[493,610,.3,20],[497,497,.25,22],[545,497,.24,22],[655,408,.46,10],[663,424,.22,10],[655,520,.4,25],[637,603,.47,24],[748,430,.04,26],[848,452,.01,24],[730,620,.08,28],[820,640,.32,30],[553,765,.07,26],[563,913,.07,26],[455,865,.4,25],[335,960,.44,18],[407,938,.18,18],[467,955,.22,18],[628,963,.33,20],[568,1000,.33,25],[403,1020,.36,18],[474,1052,.41,22],[447,1128,.03,22],[612,1115,.38,22],[622,1190,.13,22],[335,1180,.15,22],[378,1253,.14,20],[278,1228,.47,24],[713,1027,.01,22],[767,1100,.01,20],[835,1083,.01,24],[832,1240,.07,20],[265,1145,.25,18],[195,1100,.33,18],[730,1210,.25,25],[342,1300,.37,18],[402,1312,.37,15]])
];
const cv = document.getElementById('idw'), ctx = cv.getContext('2d'), W = cv.width, H = cv.height;
const path = new Path2D();
let seed = 7; const rnd = () => (seed = seed * 16807 % 2147483647) / 2147483647 - .5;
outline.forEach((p, i) => {
  const q = outline[(i + 1) % outline.length], n = Math.max(1, Math.round(Math.hypot(q[0] - p[0], q[1] - p[1]) / 8));
  for (let k = 0; k < n; k++) {
    const j = k ? 6 : 0, x = (p[0] + (q[0] - p[0]) * k / n + rnd() * j) / 3, y = (p[1] + (q[1] - p[1]) * k / n + rnd() * j) / 3;
    i || k ? path.lineTo(x, y) : path.moveTo(x, y);
  }
});
const img = ctx.createImageData(W, H), stops = [[248,0,0],[255,122,0],[247,247,0],[124,247,0],[0,247,0]];
for (let y = 0; y < H; y++) for (let x = 0; x < W; x++) {
  if (!ctx.isPointInPath(path, x + .5, y + .5)) continue;
  const X = x * 3, Y = y * 3; let s = 0, t = 0;
  for (const p of trend) { const d = (p[0] - X) ** 2 + (p[1] - Y) ** 2 + 2200, w = 1 / (d * d); s += w * p[2]; t += w; }
  let v = s / t;
  for (const p of stations) { const d = ((p[0] - X) ** 2 + (p[1] - Y) ** 2) / (p[3] * p[3]); if (d < 14) v += (p[2] - v) * Math.exp(-.8 * Math.pow(d, .8)); }
  v = Math.min(.9999, Math.max(0, v)) * 4;
  const k = v | 0, f = v - k, a = stops[k], b = stops[k + 1], o = (y * W + x) * 4;
  for (let c = 0; c < 3; c++) img.data[o + c] = a[c] + (b[c] - a[c]) * f;
  img.data[o + 3] = 255;
}
ctx.putImageData(img, 0, 0);
})();
</script>
</body>
</html>
